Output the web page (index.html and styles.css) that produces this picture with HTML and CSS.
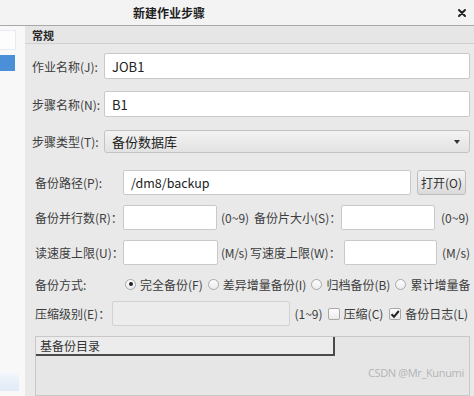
FILE: index.html
```html
<!DOCTYPE html>
<html>
<head>
<meta charset="utf-8">
<link rel="stylesheet" href="styles.css">
</head>
<body>
<div class="window">
  <div class="titlebar">
    <span class="title">新建作业步骤</span>
    <svg class="close" width="10" height="10" viewBox="0 0 10 10"><path d="M2 2L8 8M8 2L2 8" stroke="#222" stroke-width="2" stroke-linecap="round"/></svg>
  </div>
  <div class="content">
    <div class="sidebar">
      <div class="side-item side-top"></div>
      <div class="side-item side-sel"></div>
      <div class="side-spacer"></div>
      <div class="side-item side-bottom"></div>
    </div>
    <div class="main">
      <div class="section-head">常规</div>
      <div class="row r1">
        <span class="lbl lbl-top">作业名称(J):</span>
        <div class="input grow"><span class="val">JOB1</span></div>
      </div>
      <div class="row r2">
        <span class="lbl lbl-top">步骤名称(N):</span>
        <div class="input grow"><span class="val">B1</span></div>
      </div>
      <div class="row r3">
        <span class="lbl lbl-top">步骤类型(T):</span>
        <div class="select grow"><span class="val">备份数据库</span><span class="arrow"></span></div>
      </div>
      <div class="sub">
        <div class="row rp">
          <span class="lbl lbl-sub">备份路径(P):</span>
          <div class="input path"><span class="val val2">/dm8/backup</span></div>
          <div class="btn">打开(O)</div>
        </div>
        <div class="row rr">
          <span class="lbl lbl-sub">备份并行数(R)：</span>
          <div class="input w94"></div>
          <span class="unit u1">(0~9)</span>
          <span class="lbl lbl2a">备份片大小(S)：</span>
          <div class="input w94"></div>
          <span class="unit u2">(0~9)</span>
        </div>
        <div class="row ru">
          <span class="lbl lbl-sub">读速度上限(U)：</span>
          <div class="input w95"></div>
          <span class="unit u3">(M/s)</span>
          <span class="lbl lbl2b">写速度上限(W)：</span>
          <div class="input w93"></div>
          <span class="unit u4">(M/s)</span>
        </div>
        <div class="row rm">
          <span class="lbl lbl-sub lbl-mode">备份方式:</span>
          <span class="opt"><span class="radio on"></span>完全备份(F)</span>
          <span class="opt"><span class="radio"></span>差异增量备份(I)</span>
          <span class="opt"><span class="radio"></span>归档备份(B)</span>
          <span class="opt"><span class="radio"></span>累计增量备份(A)</span>
        </div>
        <div class="row re">
          <span class="lbl lbl-e">压缩级别(E)：</span>
          <div class="input disabled level"></div>
          <span class="unit u5">(1~9)</span>
          <span class="opt opt-c"><span class="check"></span>压缩(C)</span>
          <span class="opt opt-c"><span class="check on"><svg width="12" height="12" viewBox="0 0 12 12"><path d="M2.5 6.2L5 8.8L9.8 3" fill="none" stroke="#222" stroke-width="2"/></svg></span>备份日志(L)</span>
        </div>
        <div class="group">
          <div class="group-tab">基备份目录</div>
        </div>
      </div>
    </div>
  </div>
  <div class="watermark">CSDN @Mr_Kunumi</div>
</div>
</body>
</html>
```
FILE: styles.css
```css
html, body {
  margin: 0;
  padding: 0;
}
body {
  width: 474px;
  height: 396px;
  overflow: hidden;
  font-family: "Noto Sans CJK SC", "Noto Sans", sans-serif;
  font-size: 12px;
  color: #3c3c3c;
  background: #e9e9e9;
}
.window {
  position: relative;
  width: 474px;
  height: 396px;
  display: flex;
  flex-direction: column;
}
.titlebar {
  height: 25px;
  flex: none;
  background: #f3f3f3;
  border-bottom: 1px solid #a8a8a8;
  display: flex;
  align-items: center;
  padding-left: 133px;
  padding-right: 7px;
  box-sizing: content-box;
}
.title {
  font-weight: bold;
  color: #1e1e1e;
  font-size: 12px;
  flex: 1;
}
.close {
  flex: none;
}
.content {
  flex: 1;
  display: flex;
  min-height: 0;
}
.sidebar {
  width: 25px;
  flex: none;
  background: #f8f8f8;
  display: flex;
  flex-direction: column;
  padding-top: 4px;
  box-sizing: border-box;
}
.side-item {
  flex: none;
}
.side-top {
  width: 16px;
  height: 20px;
  background: #fdfdfd;
  border: 1px solid #e6ebf1;
  border-left: none;
  box-sizing: border-box;
}
.side-sel {
  margin-top: 5px;
  width: 15px;
  height: 16px;
  background: #4a8fd8;
}
.side-spacer {
  flex: 1;
}
.side-bottom {
  width: 19px;
  height: 18px;
  margin-bottom: 5px;
  background: linear-gradient(#f2f6fc, #e1eaf7);
}
.main {
  flex: 1;
  background: #e9e9e9;
  display: flex;
  flex-direction: column;
  min-width: 0;
}
.section-head {
  height: 24px;
  border-bottom: 1px solid #d0d0d0;
  background: #e6e6e6;
  display: flex;
  align-items: center;
  padding-left: 7px;
  font-weight: bold;
  font-size: 11px;
  color: #2a2a2a;
}
.row {
  display: flex;
  align-items: center;
  white-space: nowrap;
}
.r1 { margin-top: 9px; padding-left: 7px; padding-right: 4px; }
.r2 { margin-top: 12px; padding-left: 7px; padding-right: 4px; }
.r3 { margin-top: 13px; padding-left: 7px; padding-right: 4px; }
.lbl-top { width: 72px; flex: none; }
.grow { flex: 1; }
.input {
  height: 26px;
  box-sizing: border-box;
  background: #fff;
  border: 1px solid #c9c9c9;
  border-radius: 2px;
  display: flex;
  align-items: center;
}
.val {
  padding-left: 7px;
  color: #222;
  font-size: 13px;
}
.val2 { font-size: 12.5px; }
.select {
  height: 23px;
  box-sizing: border-box;
  border: 1px solid #c3c3c3;
  border-radius: 3px;
  background: linear-gradient(#f3f3f3, #e2e2e2);
  display: flex;
  align-items: center;
  justify-content: space-between;
  padding-right: 9px;
}
.arrow {
  width: 0;
  height: 0;
  border-left: 3.5px solid transparent;
  border-right: 3.5px solid transparent;
  border-top: 4px solid #333;
}
.sub {
  padding-left: 10px;
  display: flex;
  flex-direction: column;
}
.lbl-sub { width: 88px; flex: none; }
.rp { margin-top: 17px; }
.rp .input { height: 25px; }
.path { width: 288px; }
.btn {
  margin-left: 6px;
  width: 49px;
  height: 25px;
  box-sizing: border-box;
  border: 1px solid #bdbdbd;
  border-radius: 3px;
  background: linear-gradient(#f5f5f5, #dadada);
  display: flex;
  align-items: center;
  justify-content: center;
  color: #333;
}
.rr { margin-top: 10px; }
.ru { margin-top: 10px; }
.rr .input, .ru .input { height: 25px; }
.w94 { width: 94px; }
.w95 { width: 95px; }
.w93 { width: 93px; }
.unit { flex: none; }
.u1 { width: 37px; padding-left: 4px; box-sizing: border-box; }
.u2 { padding-left: 6px; }
.u3 { width: 32px; padding-left: 3px; box-sizing: border-box; letter-spacing: -0.3px; }
.u4 { padding-left: 5px; }
.lbl2a { width: 87px; flex: none; }
.lbl2b { width: 94px; flex: none; }
.rm {
  margin-top: 10px;
  height: 18px;
  width: 435px;
  overflow: hidden;
}
.lbl-mode { width: 90px; }
.opt {
  display: flex;
  align-items: center;
  margin-right: 5px;
  flex: none;
}
.radio {
  width: 11px;
  height: 11px;
  border-radius: 50%;
  border: 1px solid #a8a8a8;
  background: linear-gradient(#fdfdfd, #ececec);
  margin-right: 4px;
  box-sizing: border-box;
  display: flex;
  align-items: center;
  justify-content: center;
}
.radio.on::after {
  content: "";
  width: 4px;
  height: 4px;
  border-radius: 50%;
  background: #222;
}
.re { margin-top: 8px; }
.lbl-e { width: 77px; flex: none; }
.level { width: 181px; height: 25px; }
.disabled {
  background: #ececec;
  border-color: #d2d2d2;
}
.u5 { padding-left: 4px; margin-right: 5px; }
.opt-c { margin-right: 6px; }
.check {
  width: 12px;
  height: 12px;
  box-sizing: border-box;
  border: 1px solid #a8a8a8;
  border-radius: 2px;
  background: linear-gradient(#fdfdfd, #ececec);
  margin-right: 4px;
  display: flex;
  align-items: center;
  justify-content: center;
  position: relative;
}
.check svg {
  position: absolute;
  left: -1px;
  top: -1px;
}
.group {
  margin-top: 10px;
  width: 435px;
  height: 60px;
  box-sizing: border-box;
  border: 1px solid #c8c8c8;
  background: #e6e6e6;
}
.group-tab {
  width: 299px;
  height: 19px;
  box-sizing: border-box;
  border-right: 2px solid #4a4a4a;
  border-bottom: 2px solid #4a4a4a;
  background: #ececec;
  padding-left: 4px;
  display: flex;
  align-items: center;
  color: #333;
}
.watermark {
  position: absolute;
  left: 368px;
  top: 365px;
  font-size: 11px;
  letter-spacing: -0.4px;
  color: rgba(140, 140, 140, 0.55);
  font-family: "Noto Sans", sans-serif;
  white-space: nowrap;
}
```
